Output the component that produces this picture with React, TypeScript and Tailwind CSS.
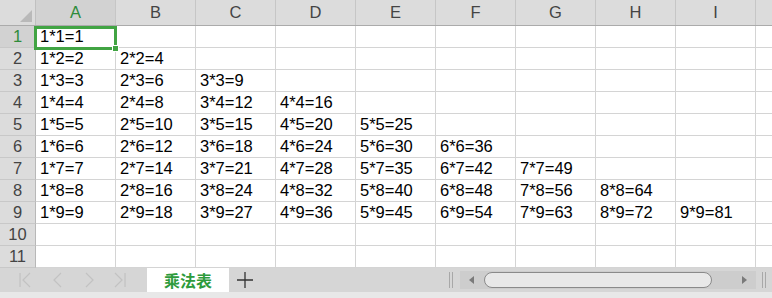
import React from "react";

const cols = ["A", "B", "C", "D", "E", "F", "G", "H", "I"];
const rows = Array.from({ length: 11 }, (_, i) => i + 1);

const cellText = (r: number, c: number): string => {
  // row r holds c*r for c = 1..r
  if (r > 9 || c + 1 > r) return "";
  return `${c + 1}*${r}=${(c + 1) * r}`;
};

const NavArrows = () => (
  <svg width="130" height="24" viewBox="0 0 130 24" className="shrink-0">
    <g stroke="#c2c2c2" strokeWidth="1.2" fill="none">
      <path d="M18 5 V19" />
      <path d="M28 5 L21 12 L28 19" />
      <path d="M59 5 L52 12 L59 19" />
      <path d="M84 5 L91 12 L84 19" />
      <path d="M113 5 L120 12 L113 19" />
      <path d="M123 5 V19" />
    </g>
  </svg>
);

const Grip = () => (
  <div className="flex gap-[2px] h-[16px] shrink-0">
    <div className="w-px h-full bg-[#a8a8a8]" />
    <div className="w-px h-full bg-[#a8a8a8]" />
  </div>
);

export default function App() {
  return (
    <div
      className="w-[772px] h-[298px] bg-white overflow-hidden text-[16.5px] text-black"
      style={{ fontFamily: '"Liberation Sans", Arial, sans-serif' }}
    >
      <div className="relative">
        {/* header row */}
        <div className="flex h-[26px] bg-[#dcdcdc] border-b border-[#ababab]">
          <div className="relative w-[36px] shrink-0 border-r border-[#c0c0c0]">
            <svg width="12" height="12" className="absolute left-[20px] top-[10px]">
              <path d="M12 0 L12 12 L0 12 Z" fill="#b9b9b9" />
            </svg>
          </div>
          {cols.map((c, i) => (
            <div
              key={c}
              className={`w-[80px] shrink-0 flex items-center justify-center border-r border-[#c6c6c6] ${
                i === 0 ? "bg-[#d2d2d2] text-[#2e8b3a]" : "text-[#444]"
              }`}
            >
              {c}
            </div>
          ))}
          <div className="flex-1" />
        </div>

        {rows.map((r) => (
          <div key={r} className="flex h-[22px]">
            <div
              className={`w-[36px] shrink-0 flex items-center justify-center border-r border-b border-[#b8b8b8] border-b-[#c8c8c8] ${
                r === 1 ? "bg-[#d2d2d2] text-[#2e8b3a]" : "bg-[#dcdcdc] text-[#444]"
              }`}
            >
              {r}
            </div>
            {cols.map((c, i) => (
              <div
                key={c}
                className="w-[80px] shrink-0 border-r border-b border-[#d4d4d4] pl-[4px] leading-[21px] whitespace-nowrap"
              >
                {cellText(r, i)}
              </div>
            ))}
            <div className="flex-1 border-b border-[#d4d4d4]" />
          </div>
        ))}

        {/* selected cell A1 */}
        <div className="absolute left-[34px] top-[26px] w-[83px] h-[24px] border-[3px] border-[#41a443]" />
        <div className="absolute left-[112px] top-[45px] w-[5px] h-[5px] bg-[#41a443] border border-white box-content" />
      </div>

      {/* sheet tab bar */}
      <div className="flex items-center h-[24px] bg-[#d6d6d6]">
        <div className="w-[147px] shrink-0 pl-[2px]">
          <NavArrows />
        </div>
        <div
          className="w-[82px] h-full shrink-0 bg-white flex items-center justify-center font-bold text-[#2e9b3c] text-[16px]"
          style={{ fontFamily: '"Noto Sans CJK SC", sans-serif' }}
        >
          乘法表
        </div>
        <div className="w-[32px] shrink-0 flex items-center justify-center">
          <svg width="16" height="16" viewBox="0 0 16 16">
            <path d="M8 0 V16 M0 8 H16" stroke="#333" strokeWidth="1.3" />
          </svg>
        </div>
        <div className="flex-1" />
        <Grip />
        <div className="ml-[7px] w-[296px] h-[18px] bg-[#cdcdcd] flex items-center">
          <svg width="8" height="8" viewBox="0 0 8 8" className="ml-[8px]">
            <path d="M6 0 L1 4 L6 8 Z" fill="#7a7a7a" />
          </svg>
          <div className="ml-[8px] w-[228px] h-[16px] rounded-full bg-[#e8e8e8] border border-[#8a8a8a]" />
          <svg width="8" height="8" viewBox="0 0 8 8" className="ml-[28px]">
            <path d="M2 0 L7 4 L2 8 Z" fill="#7a7a7a" />
          </svg>
        </div>
        <div className="ml-[6px] mr-[6px]">
          <Grip />
        </div>
      </div>
      <div className="h-[6px] bg-[#e8e8e8]" />
    </div>
  );
}
